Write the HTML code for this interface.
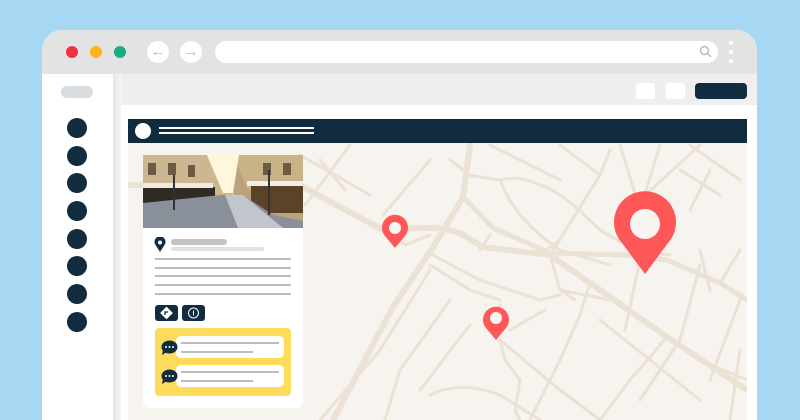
<!DOCTYPE html>
<html><head><style>
*{margin:0;padding:0;box-sizing:border-box}
html,body{width:800px;height:420px;overflow:hidden}
body{background:#a6d8f3;position:relative;font-family:"Liberation Sans",sans-serif}
.a{position:absolute}
</style></head><body>
<div class="a" style="left:42px;top:30px;width:715px;height:390px;background:#fff;border-radius:20px 20px 0 0;overflow:hidden">
  <div class="a" style="left:0;top:0;width:715px;height:44px;background:#e3e3e3"></div>
  <div class="a" style="left:71px;top:44px;width:644px;height:31px;background:#efeff1"></div>
  <div class="a" style="left:71px;top:44px;width:8px;height:346px;background:linear-gradient(90deg,#e4e4e7,#f6f6f7)"></div>
</div>
<div class="a" style="left:66px;top:46px;width:12px;height:12px;border-radius:50%;background:#ef3340"></div>
<div class="a" style="left:90px;top:46px;width:12px;height:12px;border-radius:50%;background:#fdb515"></div>
<div class="a" style="left:114px;top:46px;width:12px;height:12px;border-radius:50%;background:#1cab82"></div>
<div class="a" style="left:147px;top:41px;width:22px;height:22px;border-radius:50%;background:#fff;color:#bbb;font-size:15px;text-align:center;line-height:21px">←</div>
<div class="a" style="left:180px;top:41px;width:22px;height:22px;border-radius:50%;background:#fff;color:#bbb;font-size:15px;text-align:center;line-height:21px">→</div>
<div class="a" style="left:215px;top:41px;width:503px;height:22px;border-radius:11px;background:#fff"></div>
<svg class="a" style="left:698px;top:44px" width="16" height="16"><circle cx="6.5" cy="6.5" r="4" fill="none" stroke="#bbb" stroke-width="1.5"/><line x1="9.5" y1="9.5" x2="13" y2="13" stroke="#bbb" stroke-width="1.5"/></svg>
<div class="a" style="left:729px;top:41px;width:4px;height:4px;border-radius:50%;background:#fff"></div>
<div class="a" style="left:729px;top:50px;width:4px;height:4px;border-radius:50%;background:#fff"></div>
<div class="a" style="left:729px;top:59px;width:4px;height:4px;border-radius:50%;background:#fff"></div>
<div class="a" style="left:61px;top:86px;width:32px;height:12px;border-radius:6px;background:#d9dcdf"></div>
<div class="a" style="left:636px;top:83px;width:19px;height:16px;border-radius:3px;background:#fff"></div>
<div class="a" style="left:666px;top:83px;width:19px;height:16px;border-radius:3px;background:#fff"></div>
<div class="a" style="left:695px;top:83px;width:52px;height:16px;border-radius:4px;background:#112b3f"></div>
<div class="a" style="left:67px;top:118px">
<div style="width:20px;height:20px;border-radius:50%;background:#112b3f;margin-bottom:7.7px"></div><div style="width:20px;height:20px;border-radius:50%;background:#112b3f;margin-bottom:7.7px"></div><div style="width:20px;height:20px;border-radius:50%;background:#112b3f;margin-bottom:7.7px"></div><div style="width:20px;height:20px;border-radius:50%;background:#112b3f;margin-bottom:7.7px"></div><div style="width:20px;height:20px;border-radius:50%;background:#112b3f;margin-bottom:7.7px"></div><div style="width:20px;height:20px;border-radius:50%;background:#112b3f;margin-bottom:7.7px"></div><div style="width:20px;height:20px;border-radius:50%;background:#112b3f;margin-bottom:7.7px"></div><div style="width:20px;height:20px;border-radius:50%;background:#112b3f;margin-bottom:7.7px"></div>
</div>
<svg class="a" style="left:128px;top:143px" width="619" height="277" viewBox="128 143 619 277">
<rect x="128" y="143" width="619" height="277" fill="#f7f3ef"/>
<g stroke="#ebe1d4" fill="none" stroke-linecap="round">
<path d="M128 185 L303 187 L383 230 Q400 228 440 228 L460 233 L483 247 L550 255 L590 283 L667 337 L747 390" stroke-width="6"/>
<path d="M470 145 L463 197 L433 247 L393 307 L333 420" stroke-width="6"/>
<path d="M463 197 L493 228 L550 253 L627 255 L667 260 L720 283 L747 300" stroke-width="5"/>
<g stroke-width="3">
<path d="M300 155 L370 195 M320 160 L345 190 M350 145 L305 205 M430 160 L383 215 M450 160 L470 175 M468 175 L500 180 Q520 175 540 185 Q560 190 600 230 Q630 250 670 255"/>
<path d="M500 180 Q515 220 560 250 L610 265"/>
<path d="M490 145 L560 180 M560 145 L600 175 M600 175 L610 150 M600 175 L550 255 M620 145 L640 210 M640 210 L660 145 M700 145 L640 200 M680 170 L720 195 M690 145 L740 180 M710 170 L690 210"/>
<path d="M387 230 L405 245 L430 235 M490 235 L480 250 M540 255 L560 240"/>
<path d="M433 255 Q460 270 480 280 L540 300 L560 295 M550 255 L560 290 L575 300 M560 290 L610 300 M430 265 L470 290 L500 300"/>
<path d="M430 270 L380 350 L320 420 M450 300 L400 370 L385 420 M470 325 L420 390 M500 305 L490 330 M510 330 L545 310 M500 340 L505 360 L520 380 L515 410 L520 420 M430 395 Q460 380 500 395 L540 420"/>
<path d="M590 283 L580 315 L560 360 L530 420 M667 337 L630 380 L600 420 M640 260 L625 330 M700 265 L680 340 L640 400 M740 300 L710 380 M700 360 L747 380 M740 350 L730 420 M720 283 L740 250 M700 250 L710 290"/>
<path d="M500 340 L560 390 L600 420 M600 320 L650 360 L700 400"/>
</g>
</g>
<g fill="#fe5757">
<path d="M395 248 L385 236 A13 13 0 1 1 405 236 Z"/>
<path d="M496 340 L486 328 A13 13 0 1 1 506 328 Z"/>
<path d="M645 274 L622 243 A31 31 0 1 1 668 243 Z"/>
</g>
<g fill="#f7f4f1"><circle cx="395" cy="228" r="6"/><circle cx="496" cy="318" r="6"/><circle cx="645" cy="224" r="15"/></g>
</svg>
<div class="a" style="left:128px;top:119px;width:619px;height:24px;background:#112b3f"></div>
<div class="a" style="left:135px;top:123px;width:16px;height:16px;border-radius:50%;background:#fff"></div>
<div class="a" style="left:159px;top:127px;width:155px;height:2px;background:#fff"></div>
<div class="a" style="left:159px;top:132px;width:155px;height:2px;background:#fff"></div>
<div class="a" style="left:143px;top:155px;width:160px;height:253px;background:#fff;border-radius:0 0 6px 6px;overflow:hidden">
<svg width="160" height="73" viewBox="0 0 160 73">
<rect width="160" height="73" fill="#b9a27c"/>
<polygon points="0,0 75,0 92,40 60,42 0,46" fill="#cdb790"/>
<polygon points="90,0 160,0 160,35 105,35" fill="#c9b188"/>
<polygon points="64,0 96,0 90,38 80,38" fill="#fff6dc"/>
<rect x="5" y="8" width="8" height="12" fill="#6d5a42"/><rect x="25" y="8" width="8" height="12" fill="#6d5a42"/><rect x="45" y="10" width="7" height="12" fill="#6d5a42"/>
<rect x="120" y="8" width="8" height="12" fill="#6d5a42"/><rect x="140" y="8" width="8" height="12" fill="#6d5a42"/>
<rect x="0" y="32" width="72" height="16" fill="#2f2a24"/>
<rect x="108" y="30" width="52" height="28" fill="#5a4329"/>
<rect x="0" y="28" width="70" height="5" fill="#efeae0"/>
<rect x="104" y="26" width="56" height="5" fill="#f2efe8"/>
<polygon points="0,48 78,40 100,40 130,60 160,66 160,73 0,73" fill="#8a9099"/>
<polygon points="82,40 100,40 140,73 95,73" fill="#c2c6cc"/>
<rect x="30" y="20" width="2" height="35" fill="#333"/><rect x="125" y="15" width="2" height="45" fill="#333"/>
</svg>
<svg class="a" style="left:11px;top:82px" width="12" height="15"><path d="M6 15 L1.5 8 A5.5 5.5 0 1 1 10.5 8 Z" fill="#112b3f"/><circle cx="6" cy="5.5" r="2" fill="#fff"/></svg>
<div class="a" style="left:28px;top:84px;width:56px;height:6px;border-radius:3px;background:#c3c3c3"></div>
<div class="a" style="left:28px;top:92px;width:93px;height:4px;border-radius:2px;background:#dde2e7"></div>
<div class="a" style="left:12px;top:103px;width:136px;height:2px;background:#bdbdbd"></div>
<div class="a" style="left:12px;top:112px;width:136px;height:2px;background:#bdbdbd"></div>
<div class="a" style="left:12px;top:120px;width:136px;height:2px;background:#bdbdbd"></div>
<div class="a" style="left:12px;top:129px;width:136px;height:2px;background:#bdbdbd"></div>
<div class="a" style="left:12px;top:138px;width:136px;height:2px;background:#bdbdbd"></div>
<div class="a" style="left:12px;top:150px;width:23px;height:16px;border-radius:3px;background:#112b3f"><svg width="23" height="16"><rect x="7" y="3.5" width="9" height="9" transform="rotate(45 11.5 8)" fill="#fff"/><path d="M10 10 V7 H13" stroke="#112b3f" stroke-width="1.3" fill="none"/></svg></div>
<div class="a" style="left:39px;top:150px;width:23px;height:16px;border-radius:3px;background:#112b3f"><svg width="23" height="16"><circle cx="11.5" cy="8" r="5" stroke="#fff" fill="none"/><line x1="11.5" y1="5.5" x2="11.5" y2="10.5" stroke="#fff"/></svg></div>
<div class="a" style="left:12px;top:173px;width:136px;height:68px;border-radius:4px;background:#fddc5c"></div>
<div class="a" style="left:33px;top:181px;width:108px;height:22px;border-radius:5px;background:#fff"></div>
<div class="a" style="left:33px;top:210px;width:108px;height:22px;border-radius:5px;background:#fff"></div>
<div class="a" style="left:38px;top:187px;width:98px;height:2px;background:#bdbdbd"></div>
<div class="a" style="left:38px;top:196px;width:72px;height:2px;background:#bdbdbd"></div>
<div class="a" style="left:38px;top:216px;width:98px;height:2px;background:#bdbdbd"></div>
<div class="a" style="left:38px;top:225px;width:72px;height:2px;background:#bdbdbd"></div>
<svg class="a" style="left:18px;top:185px" width="17" height="15"><ellipse cx="8.5" cy="7" rx="8" ry="6.5" fill="#112b3f"/><path d="M2 10 L1 15 L6 12Z" fill="#112b3f"/><circle cx="5" cy="7" r="1" fill="#fff"/><circle cx="8.5" cy="7" r="1" fill="#fff"/><circle cx="12" cy="7" r="1" fill="#fff"/></svg>
<svg class="a" style="left:18px;top:214px" width="17" height="15"><ellipse cx="8.5" cy="7" rx="8" ry="6.5" fill="#112b3f"/><path d="M2 10 L1 15 L6 12Z" fill="#112b3f"/><circle cx="5" cy="7" r="1" fill="#fff"/><circle cx="8.5" cy="7" r="1" fill="#fff"/><circle cx="12" cy="7" r="1" fill="#fff"/></svg>
</div>
</body></html>
